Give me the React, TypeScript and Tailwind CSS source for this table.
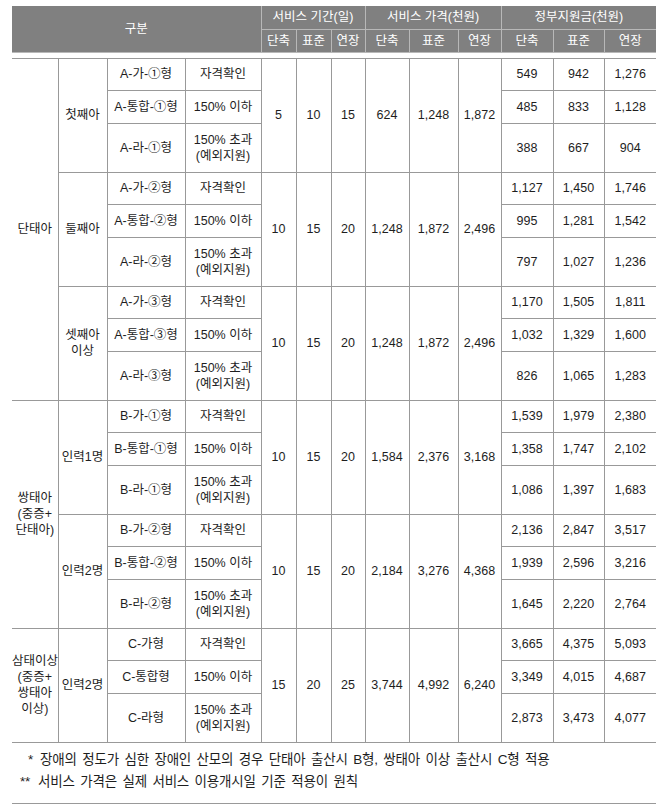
import React from 'react';

type Block = {
  top?: { label: string[]; span: number };
  sub: string[];
  types: string[];
  period: string[];
  price: string[];
  support: string[][];
};

const blocks: Block[] = [
  {
    top: { label: ['단태아'], span: 9 },
    sub: ['첫째아'],
    types: ['A-가-①형', 'A-통합-①형', 'A-라-①형'],
    period: ['5', '10', '15'],
    price: ['624', '1,248', '1,872'],
    support: [
      ['549', '942', '1,276'],
      ['485', '833', '1,128'],
      ['388', '667', '904'],
    ],
  },
  {
    sub: ['둘째아'],
    types: ['A-가-②형', 'A-통합-②형', 'A-라-②형'],
    period: ['10', '15', '20'],
    price: ['1,248', '1,872', '2,496'],
    support: [
      ['1,127', '1,450', '1,746'],
      ['995', '1,281', '1,542'],
      ['797', '1,027', '1,236'],
    ],
  },
  {
    sub: ['셋째아', '이상'],
    types: ['A-가-③형', 'A-통합-③형', 'A-라-③형'],
    period: ['10', '15', '20'],
    price: ['1,248', '1,872', '2,496'],
    support: [
      ['1,170', '1,505', '1,811'],
      ['1,032', '1,329', '1,600'],
      ['826', '1,065', '1,283'],
    ],
  },
  {
    top: { label: ['쌍태아', '(중증+', '단태아)'], span: 6 },
    sub: ['인력1명'],
    types: ['B-가-①형', 'B-통합-①형', 'B-라-①형'],
    period: ['10', '15', '20'],
    price: ['1,584', '2,376', '3,168'],
    support: [
      ['1,539', '1,979', '2,380'],
      ['1,358', '1,747', '2,102'],
      ['1,086', '1,397', '1,683'],
    ],
  },
  {
    sub: ['인력2명'],
    types: ['B-가-②형', 'B-통합-②형', 'B-라-②형'],
    period: ['10', '15', '20'],
    price: ['2,184', '3,276', '4,368'],
    support: [
      ['2,136', '2,847', '3,517'],
      ['1,939', '2,596', '3,216'],
      ['1,645', '2,220', '2,764'],
    ],
  },
  {
    top: { label: ['삼태이상', '(중증+', '쌍태아', '이상)'], span: 3 },
    sub: ['인력2명'],
    types: ['C-가형', 'C-통합형', 'C-라형'],
    period: ['15', '20', '25'],
    price: ['3,744', '4,992', '6,240'],
    support: [
      ['3,665', '4,375', '5,093'],
      ['3,349', '4,015', '4,687'],
      ['2,873', '3,473', '4,077'],
    ],
  },
];

const criteria = [['자격확인'], ['150% 이하'], ['150% 초과', '(예외지원)']];
const rowHeights = ['h-[32px]', 'h-[33px]', 'h-[49px]'];

const Cols = () => (
  <colgroup>
    <col className="w-[46px]" />
    <col className="w-[49px]" />
    <col className="w-[78px]" />
    <col className="w-[76px]" />
    <col className="w-[35px]" />
    <col className="w-[35px]" />
    <col className="w-[34px]" />
    <col className="w-[44px]" />
    <col className="w-[49px]" />
    <col className="w-[43px]" />
    <col className="w-[52px]" />
    <col className="w-[51px]" />
    <col className="w-[52px]" />
  </colgroup>
);

const Lines = ({ lines }: { lines: string[] }) => (
  <>
    {lines.map((l, i) => (
      <div key={i}>{l}</div>
    ))}
  </>
);

export default function App() {
  const td = 'border border-[#999] p-0 text-center align-middle whitespace-nowrap';
  const th = 'border border-[#b8b8b8] p-0 text-center font-normal';

  return (
    <div className="bg-white w-[668px] h-[804px] pt-[6px] pl-[12px] text-[12.5px] leading-[16px] text-[#1e1e1e] font-['Liberation_Sans','Noto_Sans_CJK_KR',sans-serif]">
      {/* header */}
      <table className="table-fixed border-collapse w-[644px] bg-[#808080] text-white">
        <Cols />
        <thead>
          <tr className="h-[23px]">
            <th rowSpan={2} colSpan={4} className={`${th} border-l-0 border-t-0`}>
              구분
            </th>
            <th colSpan={3} className={`${th} border-t-0`}>서비스 기간(일)</th>
            <th colSpan={3} className={`${th} border-t-0`}>서비스 가격(천원)</th>
            <th colSpan={3} className={`${th} border-t-0 border-r-0`}>정부지원금(천원)</th>
          </tr>
          <tr className="h-[23px]">
            {['단축', '표준', '연장', '단축', '표준', '연장', '단축', '표준', '연장'].map((t, i) => (
              <th key={i} className={`${th} ${i === 8 ? 'border-r-0' : ''}`}>
                {t}
              </th>
            ))}
          </tr>
        </thead>
      </table>

      {/* body */}
      <table className="table-fixed border-collapse w-[644px] mt-[5px] border-t border-t-[#aaa]">
        <Cols />
        <tbody>
          {blocks.map((b, bi) =>
            [0, 1, 2].map((r) => (
              <tr key={`${bi}-${r}`} className={rowHeights[r]}>
                {r === 0 && b.top && (
                  <td rowSpan={b.top.span} className={`${td} border-l-0`}>
                    <Lines lines={b.top.label} />
                  </td>
                )}
                {r === 0 && (
                  <td rowSpan={3} className={td}>
                    <Lines lines={b.sub} />
                  </td>
                )}
                <td className={td}>{b.types[r]}</td>
                <td className={td}>
                  <Lines lines={criteria[r]} />
                </td>
                {r === 0 &&
                  [...b.period, ...b.price].map((v, i) => (
                    <td key={i} rowSpan={3} className={td}>
                      {v}
                    </td>
                  ))}
                {b.support[r].map((v, i) => (
                  <td key={`s${i}`} className={`${td} ${i === 2 ? 'border-r-0' : ''}`}>
                    {v}
                  </td>
                ))}
              </tr>
            ))
          )}
        </tbody>
      </table>

      {/* notes */}
      <div className="w-[644px] border-b border-[#999] pt-[6px] pb-[10px] text-[13.5px] leading-[22px] tracking-[-0.2px] text-[#1e1e1e]">
        <div className="flex">
          <span className="w-[28px] pl-[16px]">*</span>
          <span className="[word-spacing:2px]">
            장애의 정도가 심한 장애인 산모의 경우 단태아 출산시 B형, 쌍태아 이상 출산시 C형 적용
          </span>
        </div>
        <div className="flex">
          <span className="w-[26px] pl-[8px]">**</span>
          <span className="[word-spacing:2px]">서비스 가격은 실제 서비스 이용개시일 기준 적용이 원칙</span>
        </div>
      </div>
    </div>
  );
}
